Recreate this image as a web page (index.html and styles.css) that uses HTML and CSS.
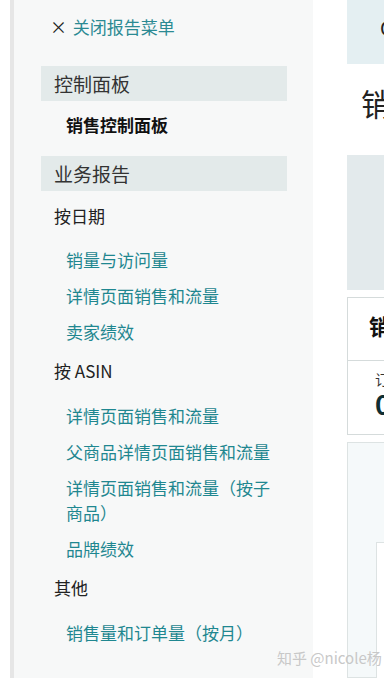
FILE: index.html
```html
<!DOCTYPE html>
<html lang="zh-CN">
<head>
  <meta charset="UTF-8" />
  <meta name="viewport" content="width=device-width, initial-scale=1.0"/>
  <title>业务报告</title>
  <link rel="stylesheet" href="styles.css">
</head>
<body>
  <div class="page">
    <aside class="sidebar">
      <a class="close-link" href="#"><span class="close-x">×</span> 关闭报告菜单</a>

      <div class="section-title">控制面板</div>
      <div class="current">销售控制面板</div>

      <div class="section-title second">业务报告</div>

      <div class="group-label">按日期</div>
      <a class="report-link" href="#">销量与访问量</a>
      <a class="report-link" href="#">详情页面销售和流量</a>
      <a class="report-link" href="#">卖家绩效</a>

      <div class="group-label">按 ASIN</div>
      <a class="report-link" href="#">详情页面销售和流量</a>
      <a class="report-link" href="#">父商品详情页面销售和流量</a>
      <a class="report-link" href="#">详情页面销售和流量（按子商品）</a>
      <a class="report-link" href="#">品牌绩效</a>

      <div class="group-label">其他</div>
      <a class="report-link" href="#">销售量和订单量（按月）</a>
    </aside>

    <main class="content">
      <div class="notice">C</div>
      <h1 class="page-title">销售控制面板</h1>
      <div class="filters"></div>
      <div class="card">
        <div class="card-head">销售快照</div>
        <div class="card-body">
          <div class="stat-label">订单商品总数</div>
          <div class="stat-value">0</div>
        </div>
      </div>
      <div class="chart-box">
        <div class="chart-inner"></div>
      </div>
    </main>

    <div class="watermark">知乎 @nicole杨</div>
  </div>
</body>
</html>
```

FILE: styles.css
```css
/* General */
body {
  margin: 0;
  font-family: "Noto Sans CJK SC", "Noto Sans", sans-serif;
  background: #fff;
  color: #111;
}

a {
  text-decoration: none;
}

.page {
  position: relative;
  display: flex;
  height: 678px;
  overflow: hidden;
  padding-left: 10px;
}

/* Sidebar */
.sidebar {
  flex: 0 0 303px;
  box-sizing: border-box;
  display: flex;
  flex-direction: column;
  align-items: flex-start;
  background: #f7f8f8;
  border-left: 4px solid #e6e6e6;
  padding: 14px 26px 0 27px;
  margin-right: 34px;
}

.close-link {
  display: block;
  font-size: 17px;
  line-height: 25px;
  color: #2b8a93;
  padding-left: 9px;
}

.close-x {
  color: #222;
  margin-right: 2px;
}

.section-title {
  align-self: stretch;
  background: #e3eaea;
  color: #333;
  font-size: 19px;
  line-height: 35px;
  height: 35px;
  padding-left: 13px;
  margin-top: 27px;
}

.section-title.second {
  margin-top: 19px;
}

.current {
  font-size: 17px;
  font-weight: bold;
  line-height: 25px;
  color: #111;
  padding-left: 25px;
  margin-top: 11px;
}

.group-label {
  font-size: 17px;
  line-height: 25px;
  color: #222;
  padding-left: 13px;
  margin-top: 14px;
  margin-bottom: 9px;
}

.section-title + .group-label {
  margin-top: 12px;
  margin-bottom: 8px;
}

.report-link {
  display: block;
  width: 210px;
  font-size: 17px;
  line-height: 25px;
  color: #1f8790;
  padding-left: 25px;
  margin-top: 11px;
}

/* Main content */
.content {
  flex: 1;
  min-width: 0;
  overflow: hidden;
}

.notice {
  height: 64px;
  background: #e4eff2;
  font-size: 20px;
  line-height: 56px;
  padding-left: 33px;
  color: #222;
}

.page-title {
  margin: 0;
  padding: 17px 0 0 14px;
  font-size: 31px;
  font-weight: normal;
  line-height: 44px;
  white-space: nowrap;
  color: #222;
}

.filters {
  height: 135px;
  margin-top: 30px;
  background: #e3eaec;
}

.card {
  margin-top: 7px;
  border: 1px solid #d5dbdb;
  border-right: none;
}

.card-head {
  height: 62px;
  line-height: 54px;
  padding-left: 21px;
  font-size: 22px;
  font-weight: bold;
  white-space: nowrap;
  color: #111;
  border-bottom: 1px solid #d5dbdb;
}

.card-body {
  height: 73px;
  padding-left: 27px;
  white-space: nowrap;
}

.stat-label {
  padding-top: 8px;
  font-size: 14px;
  line-height: 20px;
  color: #333;
}

.stat-value {
  font-size: 27px;
  font-weight: bold;
  line-height: 30px;
  color: #0f2e33;
}

.chart-box {
  height: 236px;
  margin-top: 7px;
  background: #f5f9fa;
  border: 1px solid #dde3e3;
  border-right: none;
  padding: 99px 0 0 28px;
  box-sizing: border-box;
}

.chart-inner {
  height: 100%;
  background: #fff;
  border-left: 1px solid #dde3e3;
  border-top: 1px solid #dde3e3;
}

/* Watermark */
.watermark {
  position: absolute;
  left: 277px;
  top: 647px;
  font-size: 15px;
  line-height: 22px;
  color: #c8c8c8;
}
```
